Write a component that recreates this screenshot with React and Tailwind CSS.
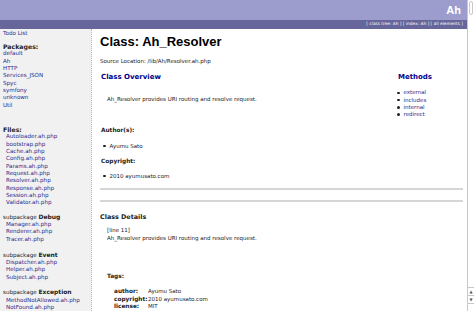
import React from "react";

const packages = ["default", "Ah", "HTTP", "Services_JSON", "Spyc", "symfony", "unknown", "Util"];
const files = [
  "Autoloader.ah.php",
  "bootstrap.php",
  "Cache.ah.php",
  "Config.ah.php",
  "Params.ah.php",
  "Request.ah.php",
  "Resolver.ah.php",
  "Response.ah.php",
  "Session.ah.php",
  "Validator.ah.php",
];
const subpackages = [
  { name: "Debug", files: ["Manager.ah.php", "Renderer.ah.php", "Tracer.ah.php"] },
  { name: "Event", files: ["Dispatcher.ah.php", "Helper.ah.php", "Subject.ah.php"] },
  { name: "Exception", files: ["MethodNotAllowed.ah.php", "NotFound.ah.php"] },
];
const methods = ["external", "includes", "internal", "redirect"];

function Sidebar() {
  return (
    <div className="w-[92px] shrink-0 bg-[#f1f1f1] border-r border-dotted border-[#bbbbbb] pl-[3px] pt-[1px] text-[5.6px] leading-[7.35px] text-[#222]">
      <div className="text-[#2a2a8c]">Todo List</div>
      <div className="mt-[5.5px] font-bold text-[6.2px]">Packages:</div>
      {packages.map((p) => (
        <div key={p} className="text-[#2a2a8c]">{p}</div>
      ))}
      <div className="mt-[17px] font-bold text-[6.2px]">Files:</div>
      {files.map((f) => (
        <div key={f} className="pl-[3px] text-[#2a2a8c]">{f}</div>
      ))}
      {subpackages.map((s, i) => (
        <div key={s.name} className={i === 0 ? "mt-[6px]" : "mt-[7.5px]"}>
          <div>
            subpackage <span className="font-bold text-[6px]">{s.name}</span>
          </div>
          {s.files.map((f) => (
            <div key={f} className="pl-[3px] text-[#2a2a8c]">{f}</div>
          ))}
        </div>
      ))}
    </div>
  );
}

function Bullet() {
  return <span className="w-[2.5px] h-[2.5px] rounded-full bg-[#222] mr-[4px]"></span>;
}

function Main() {
  return (
    <div className="flex-1 min-w-0 pl-[8px] pr-[4px] text-[5.5px] text-[#222]">
      <div className="mt-[5px] h-[16px] flex items-center font-['Liberation_Sans',sans-serif] font-bold text-[13px] text-black">
        Class: Ah_Resolver
      </div>
      <div className="mt-[7.5px] h-[7px] leading-[7px]">Source Location: /lib/Ah/Resolver.ah.php</div>

      <div className="flex">
        <div className="flex-1">
          <div className="mt-[7.5px] h-[10px] leading-[10px] pl-[1px] font-bold text-[7px] text-[#00008b]">Class Overview</div>
          <div className="mt-[13.5px] h-[7px] leading-[7px] pl-[7px]">
            Ah_Resolver provides URI routing and resolve request.
          </div>
          <div className="mt-[24px] h-[7px] leading-[7px] pl-[1px] font-bold text-[5.8px]">Author(s):</div>
          <ul className="mt-[9px]">
            <li className="h-[7px] leading-[7px] flex items-center pl-[3px]">
              <Bullet />Ayumu Sato
            </li>
          </ul>
          <div className="mt-[8px] h-[7px] leading-[7px] pl-[1px] font-bold text-[5.8px]">Copyright:</div>
          <ul className="mt-[8px]">
            <li className="h-[7px] leading-[7px] flex items-center pl-[3px]">
              <Bullet />2010 ayumusato.com
            </li>
          </ul>
        </div>
        <div className="w-[68px] mr-[14px] shrink-0">
          <div className="mt-[7.5px] h-[10px] leading-[10px] text-center font-bold text-[7px] text-[#00008b]">Methods</div>
          <ul className="mt-[7.4px] pl-[16px]">
            {methods.map((m) => (
              <li key={m} className="h-[7.2px] leading-[7.2px] flex items-center text-[#2a2a8c]">
                <Bullet />
                {m}
              </li>
            ))}
          </ul>
        </div>
      </div>

      <div className="mt-[8.5px] h-[2px] bg-[#d6d6d6]"></div>
      <div className="mt-[10px] h-[2px] bg-[#d6d6d6]"></div>

      <div className="mt-[10.5px] h-[9px] leading-[9px] font-bold text-[6.4px]">Class Details</div>
      <div className="mt-[5.75px] pl-[7px] leading-[7.5px]">
        <div>[line 11]</div>
        <div>Ah_Resolver provides URI routing and resolve request.</div>
      </div>
      <div className="mt-[30.25px] pl-[7px] h-[7px] leading-[7px] font-bold text-[5.8px]">Tags:</div>
      <div className="mt-[8.75px] pl-[14px] leading-[7.5px]">
        {[
          ["author:", "Ayumu Sato"],
          ["copyright:", "2010 ayumusato.com"],
          ["license:", "MIT"],
        ].map(([k, v]) => (
          <div key={k} className="flex">
            <span className="w-[34px] font-bold text-[5.8px]">{k}</span>
            <span>{v}</span>
          </div>
        ))}
      </div>
    </div>
  );
}

function Scrollbar() {
  return (
    <div className="w-[7px] shrink-0 flex flex-col bg-white border-l border-[#c8c8c8]">
      <div className="mx-auto mt-[1px] w-[4px] h-[14px] rounded-full border border-[#c9c9c9]"></div>
      <div className="flex-1"></div>
      <div className="h-[8px] border-t border-[#c8c8c8] flex items-center justify-center text-[4px] text-[#555]">▲</div>
      <div className="h-[8px] border-t border-[#c8c8c8] flex items-center justify-center text-[4px] text-[#555]">▼</div>
      <div className="h-[8px] border-t border-[#c8c8c8]"></div>
    </div>
  );
}

export default function App() {
  return (
    <div className="flex w-[474px] h-[311px] overflow-hidden bg-white font-['DejaVu_Sans',Verdana,sans-serif]">
      <div className="flex-1 min-w-0 flex flex-col">
        <div className="h-[20px] bg-[#9c9ccd] flex items-center justify-end pr-[6px]">
          <span className="font-['Liberation_Sans',sans-serif] font-bold text-[11px] text-white">Ah</span>
        </div>
        <div className="h-[9px] bg-[#66669a] flex items-center justify-end pr-[4px] text-[4.3px] text-white">
          [ class tree: Ah ] [ index: Ah ] [ all elements ]
        </div>
        <div className="flex flex-1 min-h-0">
          <Sidebar />
          <Main />
        </div>
      </div>
      <Scrollbar />
    </div>
  );
}
